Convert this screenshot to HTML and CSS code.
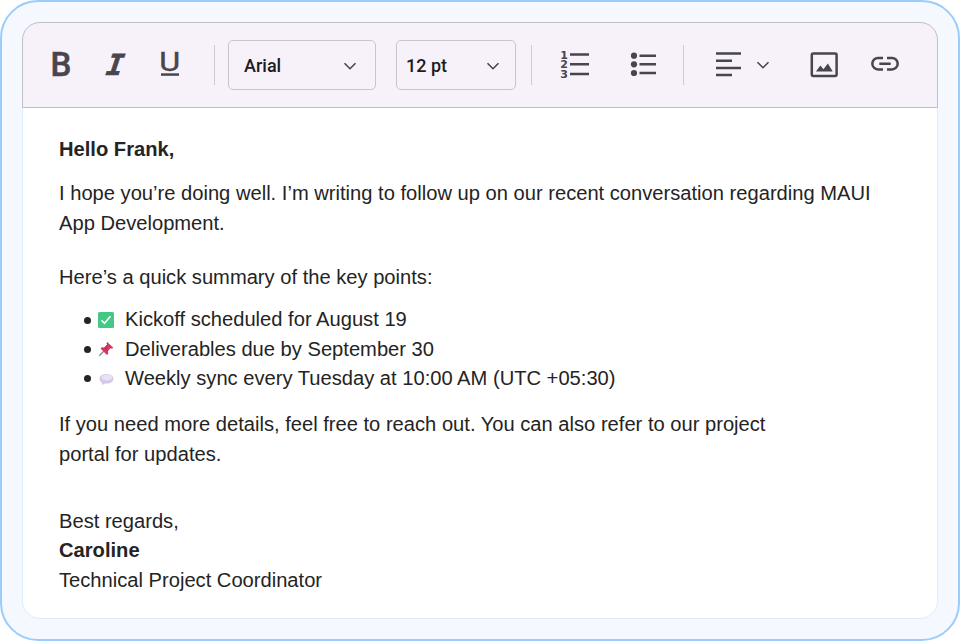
FILE: index.html
```html
<!DOCTYPE html>
<html lang="en">
<head>
  <meta charset="UTF-8">
  <title>Rich Text Editor</title>
  <link rel="stylesheet" href="styles.css">
</head>
<body>
  <div class="frame">
    <div class="editor">
      <div class="toolbar">
        <button class="tool tool-bold" type="button" aria-label="Bold">
          <svg viewBox="0 0 32 32"><text class="glyph-bold" x="5.5" y="27">B</text></svg>
        </button>
        <button class="tool tool-italic" type="button" aria-label="Italic">
          <svg viewBox="0 0 32 32"><text class="glyph-italic" transform="translate(6.3 26.3) skewX(-8)">I</text></svg>
        </button>
        <button class="tool tool-underline" type="button" aria-label="Underline">
          <svg viewBox="0 0 32 32">
            <text class="glyph-underline" transform="translate(5.2 21.8) scale(1.24 1)">U</text>
            <rect x="7" y="24.3" width="18" height="2.5"/>
          </svg>
        </button>
        <span class="separator"></span>
        <div class="select select-font">
          <span>Arial</span>
          <svg class="chevron" viewBox="0 0 14 8"><path d="M1.5 1.2 7 6.7l5.5-5.5"/></svg>
        </div>
        <div class="select select-size">
          <span>12 pt</span>
          <svg class="chevron" viewBox="0 0 14 8"><path d="M1.5 1.2 7 6.7l5.5-5.5"/></svg>
        </div>
        <span class="separator separator-lists"></span>
        <button class="tool tool-numbers" type="button" aria-label="Numbered list">
          <svg viewBox="0 0 32 32">
            <g class="glyph-number">
              <text x="1.3" y="9.5">1</text>
              <text x="1.3" y="19.2">2</text>
              <text x="1.3" y="28.9">3</text>
            </g>
            <path class="line" d="M11 5.5h19M11 15.3h19M11 25.1h19"/>
          </svg>
        </button>
        <button class="tool tool-bullets" type="button" aria-label="Bulleted list">
          <svg viewBox="0 0 32 32">
            <circle cx="6" cy="6.7" r="3.1"/>
            <circle cx="6" cy="15.3" r="3.1"/>
            <circle cx="6" cy="24" r="3.1"/>
            <path class="line" d="M11.5 6.7H28M11.5 15.3H28M11.5 24H28"/>
          </svg>
        </button>
        <span class="separator separator-align"></span>
        <button class="tool tool-align" type="button" aria-label="Align left">
          <svg viewBox="0 0 32 32"><path class="line" d="M4 4.5h25M4 11.7h16M4 18.9h25M4 26.1h16"/></svg>
        </button>
        <svg class="chevron chevron-align" viewBox="0 0 14 8"><path d="M1.5 1.2 7 6.7l5.5-5.5"/></svg>
        <button class="tool tool-image" type="button" aria-label="Insert image">
          <svg viewBox="0 0 32 32">
            <rect class="line" x="3.8" y="4.4" width="24.8" height="22.6" rx="1.5"/>
            <path d="M7.9 22.5l4.500-6 3 3.800 4.500-5.800 4.800 8z"/>
          </svg>
        </button>
        <button class="tool tool-link" type="button" aria-label="Insert link">
          <svg viewBox="0 0 32 32"><path class="line" d="M14 9H9a5.700 5.700 0 0 0 0 11.400h5M18 9h5a5.700 5.700 0 0 1 0 11.400h-5M10.300 14.700h11.400"/></svg>
        </button>
      </div>

      <div class="content">
        <p class="greeting"><b>Hello Frank,</b></p>
        <p class="intro">I hope you’re doing well. I’m writing to follow up on our recent conversation regarding MAUI<br>App Development.</p>
        <p class="summary">Here’s a quick summary of the key points:</p>
        <ul class="points">
          <li>
            <svg class="emoji" viewBox="0 0 16 16">
              <rect width="16" height="16" rx="1.5" fill="#44c886"/>
              <path d="m3.5 8.300 3 3 6-7" fill="none" stroke="#fff" stroke-width="1.6"/>
            </svg>
            <span>Kickoff scheduled for August 19</span>
          </li>
          <li>
            <svg class="emoji" viewBox="0 0 16 16">
              <path d="M6.500 9.500 1.300 14.700" stroke="#8d8790" stroke-width="1.3"/>
              <path d="m9.300 1 6 5.700-1.300 1-1.500-.4-2.500 2.500.2 3-1.200 1.200L2.500 7.500l1.300-1.200 3 .2 2.400-2.600-.7-1.700z" fill="#d93662"/>
              <path d="m9.200 4-2.400 2.500 3.200 3.300" fill="none" stroke="#ac244d"/>
            </svg>
            <span>Deliverables due by September 30</span>
          </li>
          <li>
            <svg class="emoji" viewBox="0 0 16 16">
              <path d="M8.500 3C4.500 3 1.500 5 1.500 7.800c0 1.700 1 3 2.600 3.900L4 14l2.800-1.500c4.800.6 8.700-1.500 8.700-4.700C15.500 5 12.500 3 8.500 3z" fill="#d3c9e6"/>
              <ellipse cx="9" cy="6.5" rx="5.500" ry="3" fill="#e8e2f3"/>
            </svg>
            <span>Weekly sync every Tuesday at 10:00 AM (UTC +05:30)</span>
          </li>
        </ul>
        <p class="closing">If you need more details, feel free to reach out. You can also refer to our project<br>portal for updates.</p>
        <p class="signature">Best regards,<br><b>Caroline</b><br>Technical Project Coordinator</p>
      </div>
    </div>
  </div>
</body>
</html>
```

FILE: styles.css
```css
* {
  box-sizing: border-box;
}
body {
  margin: 0;
  background: #fff;
  font-family: "Liberation Sans", Arial, sans-serif;
  color: #242424;
}
.frame {
  width: 960px;
  height: 641px;
  padding: 20px;
  border: 2px solid #9bccfc;
  border-radius: 38px;
  background: #f5f9ff;
}
.editor {
  height: 597px;
  border: 1px solid #dcecfd;
  border-radius: 18px;
  background: #fff;
}
.toolbar {
  display: flex;
  align-items: center;
  height: 86px;
  margin: -1px -1px 0;
  padding: 0 0 1px 22px;
  border: 1px solid #c4bec8;
  border-radius: 18px 18px 0 0;
  background: #f7f2fa;
}
.tool {
  flex: none;
  width: 32px;
  height: 32px;
  padding: 0;
  border: 0;
  background: none;
}
.tool svg {
  display: block;
  width: 32px;
  height: 32px;
  overflow: visible;
  fill: #49454e;
}
.tool .line {
  fill: none;
  stroke: #49454e;
  stroke-width: 2.5px;
}
.tool-italic { margin-left: 22px; }
.tool-underline { margin-left: 23px; }
.tool-numbers { margin-left: 27px; }
.tool-bullets { margin-left: 37px; }
.tool-align { margin-left: 28px; }
.tool-image { margin-left: 38px; }
.tool-link { margin-left: 29px; }
.glyph-bold {
  font: 500 33px Roboto, sans-serif;
  stroke: #49454e;
  stroke-width: 0.5px;
}
.glyph-italic {
  font: italic bold 29px "DejaVu Sans Mono", monospace;
  stroke: #49454e;
  stroke-width: 0.6px;
}
.glyph-underline {
  font: 400 26px Roboto, sans-serif;
  stroke: #49454e;
  stroke-width: 0.4px;
}
.glyph-number {
  font: bold 11px/1 "DejaVu Sans", sans-serif;
}
.separator {
  flex: none;
  width: 1px;
  height: 40px;
  margin-left: 28px;
  background: #cfc9d3;
}
.separator-lists { margin-left: 15px; }
.separator-align { margin-left: 23px; }
.select {
  flex: none;
  display: flex;
  align-items: center;
  justify-content: space-between;
  height: 50px;
  padding-top: 1px;
  border: 1px solid #cac4d0;
  border-radius: 5px;
  font: 500 18px Roboto, sans-serif;
  color: #1d1b20;
}
.select-font {
  width: 148px;
  margin-left: 13px;
  padding: 2px 18px 0 15px;
}
.select-size {
  width: 120px;
  margin-left: 20px;
  padding: 2px 15px 0 9px;
}
.chevron {
  flex: none;
  width: 14px;
  height: 8px;
  fill: none;
  stroke: #49454e;
  stroke-width: 1.6px;
}
.chevron-align {
  margin: 1px 0 0 12px;
}
.content {
  padding: 27px 36px;
  font-size: 20.15px;
  line-height: 29.35px;
  white-space: nowrap;
}
.content p {
  margin: 0;
}
.content .intro { margin-top: 15px; }
.content .summary { margin-top: 25px; }
.points {
  margin: 13px 0 0;
  padding: 0 0 0 25px;
  list-style: none;
}
.points li {
  display: flex;
  align-items: center;
}
.points li::before {
  content: "";
  width: 7px;
  height: 7px;
  margin-right: 7px;
  border-radius: 50%;
  background: #242424;
}
.emoji {
  width: 16px;
  height: 16px;
  margin-right: 11px;
}
.content .closing { margin-top: 17px; }
.content .signature { margin-top: 38px; }
```
